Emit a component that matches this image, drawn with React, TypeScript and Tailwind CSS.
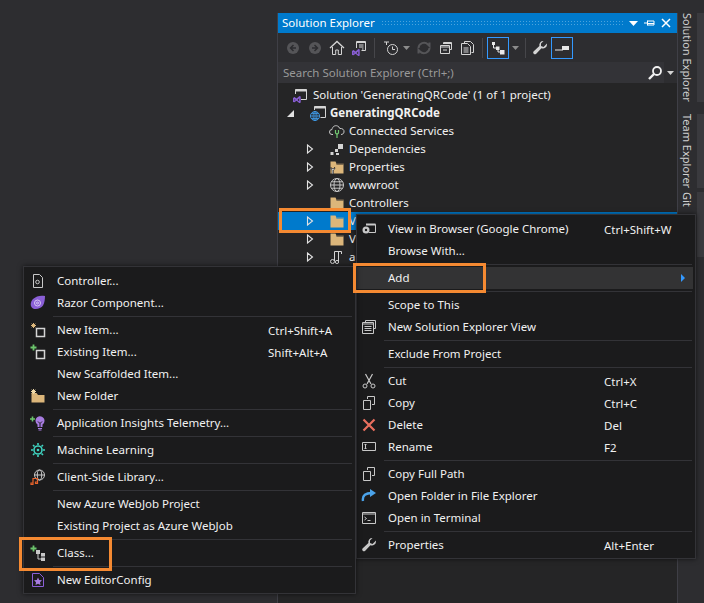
import type { ReactNode } from 'react';

const orange = 'border-[3px] border-[#f58a32]';

function Ico({ children, className = '' }: { children: ReactNode; className?: string }) {
  return (
    <svg width="16" height="16" viewBox="0 0 16 16" fill="none" className={`shrink-0 ${className}`}>
      {children}
    </svg>
  );
}

const FolderIcon = ({ dark }: { dark?: boolean }) => (
  <Ico>
    <path d="M1.500 2.500h5l1 2h7v10h-13z" fill="#dcb67a" />
    <path d="M7 4.500h7.500v1H7.500z" fill={dark ? '#007acc' : '#252526'} />
  </Ico>
);

const VsMark = () => <path d="M1 11l1.500-1 2 1.500L7.500 9l1.200.6v6l-1.200.6-3-2.500-2 1.500L1 15zM2.500 12v1.800l1-.9zM7.200 11.200l-1.600 1.700 1.600 1.500z" fill="#8a5fd6" fillRule="evenodd" />;

const SolutionIcon = () => (
  <Ico>
    <path d="M3.500 7V2.500h11v10H9" stroke="#d4d4d4" />
    <path d="M3.500 3.500h11" stroke="#d4d4d4" strokeWidth="2" />
    <VsMark />
  </Ico>
);

const ProjectIcon = () => (
  <Ico>
    <path d="M4.500 5V1.500h11v11h-5" stroke="#d4d4d4" />
    <path d="M4.500 2.500h11" stroke="#d4d4d4" strokeWidth="2" />
    <circle cx="5" cy="11" r="4.500" fill="#252526" stroke="#3f9be8" />
    <path d="M.500 11h9M5 6.500v9M1.500 8.500h7M1.500 13.500h7" stroke="#3f9be8" strokeWidth=".8" />
    <ellipse cx="5" cy="11" rx="2" ry="4.500" stroke="#3f9be8" strokeWidth=".8" />
  </Ico>
);

const Expander = () => (
  <svg width="8" height="10" viewBox="0 0 8 10" fill="none" className="shrink-0">
    <path d="M1.500 1v8l5-4z" stroke="#e2e2e2" strokeWidth="1.100" />
  </svg>
);

type TreeRow = {
  label: string;
  icon: ReactNode;
  pad: string;
  arrow?: boolean;
  selected?: boolean;
};

const treeRows: TreeRow[] = [
  {
    label: 'Connected Services',
    pad: 'pl-[51px]',
    icon: (
      <Ico>
        <path d="M4 11.500H3a2.500 2.500 0 0 1 0-5c.4-3 3-4.500 5.500-3.500 1.200.5 2 1.500 2.300 2.500 2.700-.3 4.500 1.200 4.200 3.500-.1 1.300-1.200 2.500-3 2.500" stroke="#c8c8c8" />
        <path d="M6.500 7v3l1.500 1.500L9.500 10V7M8 11.500V15" stroke="#71c771" strokeWidth="1.200" />
      </Ico>
    ),
  },
  {
    label: 'Dependencies',
    pad: 'pl-[28px]',
    arrow: true,
    icon: (
      <Ico>
        <path d="M9 3h5v5H9zM6 8h3v3H6zM1.500 11h3v3h-3zM7 12h3v2H7z" fill="#d4d4d4" />
      </Ico>
    ),
  },
  {
    label: 'Properties',
    pad: 'pl-[28px]',
    arrow: true,
    icon: (
      <Ico>
        <path d="M1.500 2.500h5l1 2h7v10h-13z" fill="#dcb67a" />
        <path d="M7 4.500h7.500v1H7.500z" fill="#252526" />
        <path d="M2 8a2 2 0 0 0 1 3v4h1.500v-4a2 2 0 0 0 1-3v1.500h-3.500z" fill="#c8c8c8" stroke="#252526" strokeWidth=".6" />
      </Ico>
    ),
  },
  {
    label: 'wwwroot',
    pad: 'pl-[28px]',
    arrow: true,
    icon: (
      <Ico>
        <circle cx="8" cy="8" r="6.500" stroke="#c8c8c8" />
        <ellipse cx="8" cy="8" rx="3" ry="6.500" stroke="#c8c8c8" />
        <path d="M1.500 8h13M2.500 4.800h11M2.500 11.200h11" stroke="#c8c8c8" />
      </Ico>
    ),
  },
  { label: 'Controllers', pad: 'pl-[51px]', icon: <FolderIcon /> },
  { label: 'Views', pad: 'pl-[28px]', arrow: true, selected: true, icon: <FolderIcon dark /> },
  { label: 'Views', pad: 'pl-[28px]', arrow: true, icon: <FolderIcon /> },
  {
    label: 'app.js',
    pad: 'pl-[28px]',
    arrow: true,
    icon: (
      <Ico>
        <path d="M5.500 12V2.500h7V5" stroke="#d4d4d4" />
        <circle cx="3.500" cy="12.500" r="2" stroke="#d4d4d4" />
        <path d="M9.500 2.500v10" stroke="#d4d4d4" />
        <circle cx="8" cy="13" r="1.600" stroke="#d4d4d4" />
      </Ico>
    ),
  },
];

const Chevron = ({ color = '#d4d4d4' }: { color?: string }) => (
  <svg width="7" height="4" viewBox="0 0 7 4" className="shrink-0">
    <path d="M0 0h7L3.500 4z" fill={color} />
  </svg>
);

function SolutionExplorer() {
  return (
    <div className="flex h-full w-full flex-col border-x border-[#3f3f46] bg-[#252526]">
      <div className="flex h-[20px] items-center bg-[#007acc] pl-[4px] pr-[6px] text-white">
        <span className="whitespace-nowrap">Solution Explorer</span>
        <div className="mx-[6px] h-[6px] flex-1 bg-[radial-gradient(#4ba3dd_1px,transparent_1px)] bg-[length:3px_3px]" />
        <div className="flex items-center gap-[6px]">
          <svg width="9" height="5" viewBox="0 0 9 5"><path d="M0 0h9L4.500 5z" fill="#fff" /></svg>
          <svg width="11" height="10" viewBox="0 0 11 10" fill="none"><path d="M0 5h3M3.500 2.500v5M3.500 3h6.500v4H3.500" stroke="#fff" /><path d="M4 5.500h6" stroke="#fff" /></svg>
          <svg width="10" height="10" viewBox="0 0 10 10" fill="none"><path d="M1 1l8 8M9 1L1 9" stroke="#fff" strokeWidth="1.500" /></svg>
        </div>
      </div>

      <div className="flex h-[29px] items-center bg-[#2d2d30] pl-[4px]">
        <div className="flex h-[22px] w-[22px] items-center justify-center">
          <Ico>
            <circle cx="8" cy="8" r="6" fill="#555558" />
            <path d="M8.500 5L5.500 8l3 3M6 8h5" stroke="#2d2d30" strokeWidth="1.500" />
          </Ico>
        </div>
        <div className="flex h-[22px] w-[22px] items-center justify-center">
          <Ico>
            <circle cx="8" cy="8" r="6" fill="#555558" />
            <path d="M7.500 5l3 3-3 3M10 8H5" stroke="#2d2d30" strokeWidth="1.500" />
          </Ico>
        </div>
        <div className="flex h-[22px] w-[22px] items-center justify-center">
          <Ico>
            <path d="M1 8l7-6.500L15 8" stroke="#d4d4d4" strokeWidth="1.300" />
            <path d="M3.500 7v7.500h3.200V10h2.600v4.500h3.200V7" stroke="#d4d4d4" />
          </Ico>
        </div>
        <div className="flex h-[22px] w-[22px] items-center justify-center">
          <Ico>
            <path d="M5.500 8V1.500h9v9h-4" stroke="#d4d4d4" />
            <path d="M5.500 2.500h9M8 5h4.500M8 7h4.500M11 9h1.500" stroke="#d4d4d4" />
            <VsMark />
          </Ico>
        </div>
        <div className="mx-[4px] h-[20px] w-px bg-[#46464a]" />
        <div className="flex h-[22px] w-[34px] items-center gap-[4px] pl-[4px]">
          <Ico>
            <path d="M1 2h5M3.500 2v3" stroke="#d4d4d4" />
            <circle cx="9.500" cy="9.500" r="5" stroke="#d4d4d4" />
            <path d="M9.500 6.500v3h2.500" stroke="#d4d4d4" />
          </Ico>
          <Chevron color="#8c8c8c" />
        </div>
        <div className="flex h-[22px] w-[22px] items-center justify-center">
          <Ico>
            <path d="M2.500 8a5.500 5.500 0 0 1 9.500-3.500L13.500 6V2.500M13.500 8A5.500 5.500 0 0 1 4 11.500L2.500 10v3.500" stroke="#555558" strokeWidth="2" />
          </Ico>
        </div>
        <div className="flex h-[22px] w-[22px] items-center justify-center">
          <Ico>
            <path d="M5.500 4V2.500h8v7H12" stroke="#d4d4d4" />
            <path d="M5.500 3.500h8" stroke="#d4d4d4" />
            <path d="M2.500 5.500h9v8h-9zM2.500 7h9M5 10h4" stroke="#d4d4d4" />
          </Ico>
        </div>
        <div className="flex h-[22px] w-[22px] items-center justify-center">
          <Ico>
            <path d="M4.500 3V1.500h6l3 3v8h-2" stroke="#d4d4d4" />
            <path d="M1.500 3.500h6l3 3v8h-9zM3.500 8h5M3.500 10h5M3.500 12h5" stroke="#d4d4d4" />
          </Ico>
        </div>
        <div className="ml-[3px] h-[20px] w-px bg-[#46464a]" />
        <div className="ml-[4px] flex h-[22px] w-[22px] items-center justify-center border border-[#3399ff]">
          <Ico>
            <path d="M2 2h3v3H2zM6 6.500h3.500V10H6zM10 10h4.500v4.500H10z" fill="#e8e8e8" />
            <path d="M3.500 5v3H6M8 10v2h2" stroke="#e8e8e8" />
          </Ico>
        </div>
        <div className="flex w-[13px] justify-center">
          <Chevron color="#8c8c8c" />
        </div>
        <div className="ml-[3px] h-[20px] w-px bg-[#46464a]" />
        <div className="ml-[3px] flex h-[22px] w-[22px] items-center justify-center">
          <Ico>
            <path d="M15 4.500a4 4 0 0 1-5.600 3.700L4 14a1.800 1.800 0 0 1-2.500-2.500L7.400 6A4 4 0 0 1 11.500 1L9 3.500v2.500l2.500 1L15 3.500z" fill="#d4d4d4" />
          </Ico>
        </div>
        <div className="flex h-[22px] w-[22px] items-center justify-center border border-[#3399ff]">
          <Ico>
            <path d="M1 10h8" stroke="#e8e8e8" />
            <path d="M8 6h7v4H8z" fill="#e8e8e8" />
          </Ico>
        </div>
      </div>

      <div className="flex h-[21px] items-center">
        <div className="flex h-full flex-1 items-center justify-between bg-[#333337] pl-[5px] pr-[1px] text-[#999999]">
          <span>Search Solution Explorer (Ctrl+;)</span>
          <Ico>
            <circle cx="10" cy="6" r="4" stroke="#f1f1f1" strokeWidth="1.800" />
            <path d="M7 9l-5 5" stroke="#f1f1f1" strokeWidth="2.400" />
          </Ico>
        </div>
        <div className="flex h-full w-[13px] items-center justify-center bg-[#2d2d30]">
          <Chevron />
        </div>
      </div>

      <div className="mt-[3px] flex h-[18px] items-center pl-[14px]">
        <SolutionIcon />
        <span className="ml-[5px] whitespace-nowrap">Solution 'GeneratingQRCode' (1 of 1 project)</span>
      </div>
      <div className="flex h-[18px] items-center pl-[9px]">
        <svg width="7" height="7" viewBox="0 0 7 7" className="shrink-0"><path d="M7 0v7H0z" fill="#e2e2e2" /></svg>
        <div className="ml-[16px]"><ProjectIcon /></div>
        <span className="ml-[4px] font-bold">GeneratingQRCode</span>
      </div>
      {treeRows.map((row, i) => (
        <div key={i} className={`flex h-[18px] items-center ${row.pad} ${row.selected ? 'bg-[#007acc]' : ''}`}>
          {row.arrow && <div className="mr-[15px]"><Expander /></div>}
          {row.icon}
          <span className="ml-[4px] whitespace-nowrap">{row.label}</span>
        </div>
      ))}
    </div>
  );
}

type Item = { label?: string; key?: string; icon?: ReactNode; sep?: boolean; hot?: boolean };

const wrench = (
  <Ico>
    <path d="M15 4.500a4 4 0 0 1-5.600 3.700L4 14a1.800 1.800 0 0 1-2.500-2.500L7.400 6A4 4 0 0 1 11.500 1L9 3.500v2.500l2.500 1L15 3.500z" fill="#c8c8c8" />
  </Ico>
);

const copyIcon = (
  <Ico>
    <path d="M6.500 4V1.500h7v8H11" stroke="#c8c8c8" />
    <path d="M2.500 5.500h7v9h-7z" stroke="#c8c8c8" />
  </Ico>
);

const addMenu: Item[] = [
  {
    label: 'View in Browser (Google Chrome)',
    key: 'Ctrl+Shift+W',
    icon: (
      <Ico>
        <path d="M5 3.500h9.500v8H8" stroke="#c8c8c8" />
        <path d="M5 3.500h9.500" stroke="#c8c8c8" strokeWidth="2" />
        <circle cx="5" cy="9" r="3.500" fill="#c8c8c8" />
        <circle cx="5" cy="9" r="1.200" fill="#1b1b1c" />
      </Ico>
    ),
  },
  { label: 'Browse With...' },
  { sep: true },
  { label: 'Add', hot: true },
  { sep: true },
  { label: 'Scope to This' },
  {
    label: 'New Solution Explorer View',
    icon: (
      <Ico>
        <path d="M4.500 3V1.500h10v8H13" stroke="#c8c8c8" />
        <path d="M1.500 3.500h11v11h-11zM1.500 5h11M3.500 7.500h7M3.500 9.500h7M3.500 11.500h7" stroke="#c8c8c8" />
      </Ico>
    ),
  },
  { sep: true },
  { label: 'Exclude From Project' },
  { sep: true },
  {
    label: 'Cut',
    key: 'Ctrl+X',
    icon: (
      <Ico>
        <path d="M4.500 1l5.500 10M11.500 1L6 11" stroke="#c8c8c8" strokeWidth="1.200" />
        <circle cx="4" cy="13" r="2" stroke="#c8c8c8" />
        <circle cx="12" cy="13" r="2" stroke="#c8c8c8" />
      </Ico>
    ),
  },
  { label: 'Copy', key: 'Ctrl+C', icon: copyIcon },
  {
    label: 'Delete',
    key: 'Del',
    icon: (
      <Ico>
        <path d="M2.500 2.500l11 11M13.500 2.500l-11 11" stroke="#e96f5e" strokeWidth="2.200" />
      </Ico>
    ),
  },
  {
    label: 'Rename',
    key: 'F2',
    icon: (
      <Ico>
        <path d="M1.500 3.500h13v8h-13z" stroke="#c8c8c8" />
        <path d="M3.500 5.500h2M3.500 9.500h2M4.500 5.500v4" stroke="#c8c8c8" />
      </Ico>
    ),
  },
  { sep: true },
  { label: 'Copy Full Path', icon: copyIcon },
  {
    label: 'Open Folder in File Explorer',
    icon: (
      <Ico>
        <path d="M2 13C1 7 5 5 11 5" stroke="#4ba3ea" strokeWidth="2.400" />
        <path d="M9 1l6 4-6 4z" fill="#4ba3ea" />
      </Ico>
    ),
  },
  {
    label: 'Open in Terminal',
    icon: (
      <Ico>
        <path d="M1.500 2.500h13v11h-13zM1.500 4h13M3.500 7l2 1.500-2 1.500M6.500 10.500h3" stroke="#c8c8c8" />
      </Ico>
    ),
  },
  { sep: true },
  { label: 'Properties', key: 'Alt+Enter', icon: wrench },
];

const newMenu: Item[] = [
  {
    label: 'Controller...',
    icon: (
      <Ico>
        <path d="M3.500 1.500h6l3 3v10h-9z" stroke="#c8c8c8" />
        <circle cx="7.500" cy="9" r="1.800" stroke="#c8c8c8" />
      </Ico>
    ),
  },
  {
    label: 'Razor Component...',
    icon: (
      <Ico>
        <path d="M15 1c-4-1-9 0-12 3-3 3-3 8 0 9.500 3 1.500 8 0 10-3 1.500-2.500 2-6.500 2-9.500z" fill="#8a5fd6" />
        <circle cx="7.500" cy="8" r="3" stroke="#d6c6f2" />
        <circle cx="7.500" cy="8" r="1" stroke="#d6c6f2" />
      </Ico>
    ),
  },
  { sep: true },
  {
    label: 'New Item...',
    key: 'Ctrl+Shift+A',
    icon: (
      <Ico>
        <path d="M6.500 6.500h8v8h-8z" stroke="#d4d4d4" strokeWidth="1.500" />
        <path d="M1 3.500h5M3.500 1v5M1.700 1.700l3.600 3.600M5.300 1.700L1.700 5.300" stroke="#dcb67a" />
      </Ico>
    ),
  },
  {
    label: 'Existing Item...',
    key: 'Shift+Alt+A',
    icon: (
      <Ico>
        <path d="M6.500 6.500h8v8h-8z" stroke="#d4d4d4" strokeWidth="1.500" />
        <path d="M.500 3.500h6M3.500.500v6" stroke="#6cc56c" strokeWidth="1.800" />
      </Ico>
    ),
  },
  { label: 'New Scaffolded Item...' },
  {
    label: 'New Folder',
    icon: (
      <Ico>
        <path d="M1.500 5h5l1.500 2h6.500v7.500h-13z" fill="#dcb67a" />
        <path d="M1 3.500h5M3.500 1v5M1.700 1.700l3.600 3.600M5.300 1.700L1.700 5.300" stroke="#f0d9a8" />
      </Ico>
    ),
  },
  { sep: true },
  {
    label: 'Application Insights Telemetry...',
    icon: (
      <Ico>
        <path d="M5.500 6a4.500 4.500 0 1 1 7 3.500V12h-5V9.500A4.500 4.500 0 0 1 5.500 6z" fill="#a77ce0" />
        <path d="M8 13.500h4M8.500 15h3" stroke="#a77ce0" />
        <path d="M8 6.500l2 2 2-2M10 8.500V12" stroke="#1b1b1c" />
        <path d="M0 4h5M2.500 1.500v5" stroke="#6cc56c" strokeWidth="1.600" />
      </Ico>
    ),
  },
  { sep: true },
  {
    label: 'Machine Learning',
    icon: (
      <Ico>
        <circle cx="8" cy="8" r="4" stroke="#3fd2c0" strokeWidth="1.600" />
        <circle cx="8" cy="8" r="1.300" fill="#3fd2c0" />
        <path d="M8 1v2M8 13v2M1 8h2M13 8h2M3 3l1.500 1.500M11.500 11.500L13 13M13 3l-1.500 1.500M4.500 11.500L3 13" stroke="#3fd2c0" strokeWidth="1.600" />
      </Ico>
    ),
  },
  { sep: true },
  {
    label: 'Client-Side Library...',
    icon: (
      <Ico>
        <circle cx="9.500" cy="6" r="5" stroke="#c8c8c8" />
        <ellipse cx="9.500" cy="6" rx="2.200" ry="5" stroke="#c8c8c8" />
        <path d="M4.500 6h10" stroke="#c8c8c8" />
        <path d="M3 14V9.500h4.500V13M3 14H1v1.500h2zM7.500 13h-2v1.500h2z" stroke="#e8642c" strokeWidth="1.200" />
      </Ico>
    ),
  },
  { sep: true },
  { label: 'New Azure WebJob Project' },
  { label: 'Existing Project as Azure WebJob' },
  { sep: true },
  {
    label: 'Class...',
    icon: (
      <Ico>
        <path d="M.500 3.500h6M3.500.500v6" stroke="#6cc56c" strokeWidth="1.800" />
        <path d="M6 5h4v4H6zM11 8h4v3.500h-4zM11 12.500h4V16h-4z" fill="#c8c8c8" />
        <path d="M8 9v5h3" stroke="#c8c8c8" />
      </Ico>
    ),
  },
  { sep: true },
  {
    label: 'New EditorConfig',
    icon: (
      <Ico>
        <path d="M2.500 1.500h7l4 4v9h-11z" stroke="#8a5fd6" />
        <path d="M8 5.500l1.200 2.500 2.800.3-2 2 .5 2.700L8 11.700 5.500 13l.5-2.700-2-2 2.800-.3z" fill="#a77ce0" />
      </Ico>
    ),
  },
];

function ContextMenu({
  items,
  className,
  keyLeft,
  slot,
  sepPad,
}: {
  items: Item[];
  className: string;
  keyLeft: string;
  slot: string;
  sepPad: string;
}) {
  return (
    <div className={`absolute border border-[#333337] bg-[#1b1b1c] pb-[2px] pt-[3px] shadow-[0_0_5px_rgba(0,0,0,0.6)] ${className}`}>
      {items.map((it, i) =>
        it.sep ? (
          <div key={i} className={`flex h-[5px] items-center pr-[3px] ${sepPad}`}>
            <div className="h-px w-full bg-[#333337]" />
          </div>
        ) : (
          <div key={i} className={`relative flex h-[22px] items-center whitespace-nowrap ${it.hot ? 'mr-[2px] bg-[#333334]' : ''}`}>
            <div className={`flex shrink-0 justify-center ${slot}`}>{it.icon}</div>
            <span>{it.label}</span>
            {it.key && <span className={`absolute top-[3px] ${keyLeft}`}>{it.key}</span>}
            {it.hot && (
              <svg width="4" height="8" viewBox="0 0 4 8" className="absolute right-[8px] top-[7px]">
                <path d="M0 0l4 4-4 4z" fill="#3399ff" />
              </svg>
            )}
          </div>
        )
      )}
    </div>
  );
}

export default function App() {
  return (
    <div className="relative flex h-[603px] w-[704px] overflow-hidden bg-[#2d2d30] font-['Noto_Sans',sans-serif] text-[11.5px] text-[#f1f1f1]">
      <div className="w-[277px] shrink-0" />
      <div className="w-[401px] shrink-0 pt-[13px]">
        <SolutionExplorer />
      </div>
      <div className="flex flex-col items-start pl-[2px] pt-[13px] text-[11px] leading-[14px] text-[#d0d0d0]">
        <span className="h-[89px] whitespace-nowrap [writing-mode:vertical-rl]">Solution Explorer</span>
        <span className="mt-[12px] h-[74px] whitespace-nowrap [writing-mode:vertical-rl]">Team Explorer</span>
        <span className="mt-[4px] whitespace-nowrap [writing-mode:vertical-rl]">Git</span>
      </div>
      <div className="ml-auto flex w-[7px] flex-col pt-[13px]">
        <div className="h-[89px] bg-[#3a3a3e]" />
        <div className="mt-[12px] h-[74px] bg-[#3a3a3e]" />
        <div className="mt-[4px] h-[65px] bg-[#3a3a3e]" />
      </div>

      <ContextMenu
        items={addMenu}
        keyLeft="left-[247px]"
        slot="w-[31px] pr-[7px]"
        sepPad="pl-[27px]"
        className="left-[356px] top-[214px] w-[340px]"
      />
      <ContextMenu
        items={newMenu}
        keyLeft="left-[244px]"
        slot="w-[33px] pr-[6px]"
        sepPad="pl-[29px]"
        className="left-[23px] top-[266px] w-[333px]"
      />

      <div className={`absolute left-[279px] top-[208px] h-[25px] w-[72px] ${orange}`} />
      <div className={`absolute left-[353px] top-[263px] h-[30px] w-[133px] ${orange}`} />
      <div className={`absolute left-[19px] top-[537px] h-[34px] w-[93px] ${orange}`} />
    </div>
  );
}
